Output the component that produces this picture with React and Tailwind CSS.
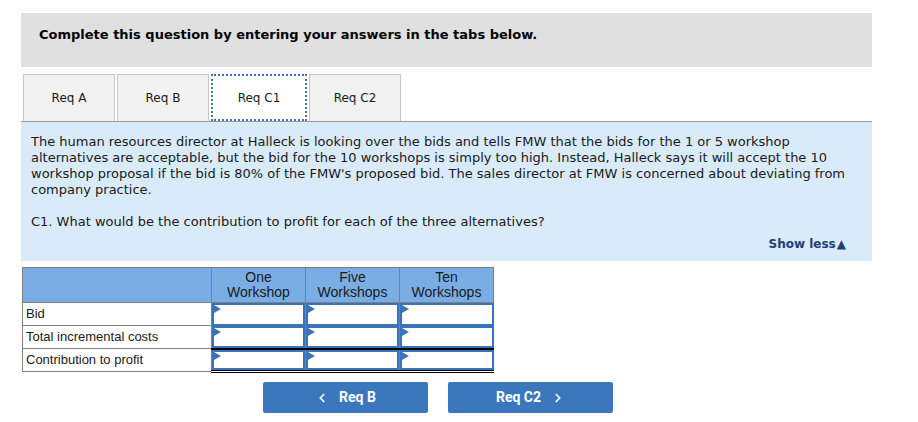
import React from 'react';
import { ChevronLeft, ChevronRight } from 'lucide-react';

const tabs = ['Req A', 'Req B', 'Req C1', 'Req C2'];
const rows = ['Bid', 'Total incremental costs', 'Contribution to profit'];

const Marker = () => (
  <svg className="absolute left-0 top-0" width="7" height="8" viewBox="0 0 7 8">
    <path d="M0 0 L7 4 L0 8 Z" fill="#3a74b8" />
  </svg>
);

const InputCell = ({ last }) => (
  <td
    className={`p-0 border-l border-[#7f7f7f] h-[23px] ${
      last ? 'border-t-2 border-t-black border-b-[3px] border-b-black border-double' : ''
    }`}
  >
    <div className="relative h-full border-2 border-[#3a74b8] bg-white">
      <Marker />
    </div>
  </td>
);

const App = () => {
  return (
    <div className="w-[918px] h-[422px] bg-white pt-[13px] pl-[21px] font-['DejaVu_Sans',Verdana,sans-serif] text-[#1a1a1a]">
      <div className="w-[851px] h-[54px] bg-[#e0e0e0] pt-[14px] pl-[18px]">
        <h1 className="text-[13px] leading-[16px] font-bold text-black">
          Complete this question by entering your answers in the tabs below.
        </h1>
      </div>

      <div className="w-[851px] mt-[7px] flex gap-[2px] pl-[2px] border-b border-[#9a9a9a]">
        {tabs.map((t) => {
          const active = t === 'Req C1';
          return (
            <div
              key={t}
              className={`h-[47px] flex items-center justify-center text-[12px] ${
                active
                  ? 'w-[96px] bg-white border-2 border-dotted border-[#3a74b8] mb-[-1px]'
                  : 'w-[92px] bg-[#f2f2f2] border border-[#c8c8c8] border-b-0'
              }`}
            >
              {t}
            </div>
          );
        })}
      </div>

      <div className="w-[851px] h-[139px] bg-[#d9ebf9] pt-[12px] pl-[10px] pr-[14px] relative text-[13px] leading-[16px]">
        <p>
          The human resources director at Halleck is looking over the bids and tells FMW that the bids for the 1 or 5 workshop
          alternatives are acceptable, but the bid for the 10 workshops is simply too high. Instead, Halleck says it will accept the 10
          workshop proposal if the bid is 80% of the FMW's proposed bid. The sales director at FMW is concerned about deviating from
          company practice.
        </p>
        <p className="mt-[16px]">C1. What would be the contribution to profit for each of the three alternatives?</p>
        <div className="absolute right-[26px] bottom-[9px] text-[12px] font-bold text-[#1f3f75] flex items-center gap-[1px]">
          Show less
          <span className="text-[12px] leading-none">▲</span>
        </div>
      </div>

      <table className="mt-[6px] ml-[1px] border-collapse font-['Liberation_Sans',Arial,sans-serif] text-[13px] text-[#1a1a1a]">
        <thead>
          <tr className="bg-[#7aade3] h-[35px]">
            <th className="w-[189px] border border-[#7f7f7f]"></th>
            <th className="w-[94px] border border-[#7f7f7f] font-normal text-[14px] leading-[15px] text-center align-bottom pb-[2px]">
              One<br />Workshop
            </th>
            <th className="w-[94px] border border-[#7f7f7f] font-normal text-[14px] leading-[15px] text-center align-bottom pb-[2px]">
              Five<br />Workshops
            </th>
            <th className="w-[94px] border border-[#7f7f7f] font-normal text-[14px] leading-[15px] text-center align-bottom pb-[2px]">
              Ten<br />Workshops
            </th>
          </tr>
        </thead>
        <tbody>
          {rows.map((r, i) => (
            <tr key={r} className="h-[23px]">
              <td className="border border-[#7f7f7f] px-[3px] text-[13px]">{r}</td>
              <InputCell last={i === 2} />
              <InputCell last={i === 2} />
              <InputCell last={i === 2} />
            </tr>
          ))}
        </tbody>
      </table>

      <div className="flex gap-[20px] ml-[242px] mt-[9px] font-['Roboto',Arial,sans-serif]">
        <button className="w-[165px] h-[31px] bg-[#3a77bd] rounded-[2px] text-white text-[14px] font-bold flex items-center justify-center gap-[10px]">
          <ChevronLeft size={14} strokeWidth={3} />
          <span>Req B</span>
        </button>
        <button className="w-[165px] h-[31px] bg-[#3a77bd] rounded-[2px] text-white text-[14px] font-bold flex items-center justify-center gap-[10px]">
          <span>Req C2</span>
          <ChevronRight size={14} strokeWidth={3} />
        </button>
      </div>
    </div>
  );
};

export default App;
